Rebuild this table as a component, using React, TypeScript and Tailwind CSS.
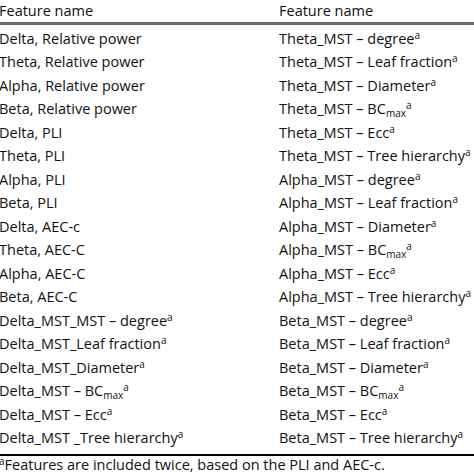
import React from "react";

type Cell = { text: string; sub?: string; sup?: boolean };

const rows: [Cell, Cell][] = [
  [{ text: "Delta, Relative power" }, { text: "Theta_MST – degree", sup: true }],
  [{ text: "Theta, Relative power" }, { text: "Theta_MST – Leaf fraction", sup: true }],
  [{ text: "Alpha, Relative power" }, { text: "Theta_MST – Diameter", sup: true }],
  [{ text: "Beta, Relative power" }, { text: "Theta_MST – BC", sub: "max", sup: true }],
  [{ text: "Delta, PLI" }, { text: "Theta_MST – Ecc", sup: true }],
  [{ text: "Theta, PLI" }, { text: "Theta_MST – Tree hierarchy", sup: true }],
  [{ text: "Alpha, PLI" }, { text: "Alpha_MST – degree", sup: true }],
  [{ text: "Beta, PLI" }, { text: "Alpha_MST – Leaf fraction", sup: true }],
  [{ text: "Delta, AEC-c" }, { text: "Alpha_MST – Diameter", sup: true }],
  [{ text: "Theta, AEC-C" }, { text: "Alpha_MST – BC", sub: "max", sup: true }],
  [{ text: "Alpha, AEC-C" }, { text: "Alpha_MST – Ecc", sup: true }],
  [{ text: "Beta, AEC-C" }, { text: "Alpha_MST – Tree hierarchy", sup: true }],
  [{ text: "Delta_MST_MST – degree", sup: true }, { text: "Beta_MST – degree", sup: true }],
  [{ text: "Delta_MST_Leaf fraction", sup: true }, { text: "Beta_MST – Leaf fraction", sup: true }],
  [{ text: "Delta_MST_Diameter", sup: true }, { text: "Beta_MST – Diameter", sup: true }],
  [{ text: "Delta_MST – BC", sub: "max", sup: true }, { text: "Beta_MST – BC", sub: "max", sup: true }],
  [{ text: "Delta_MST – Ecc", sup: true }, { text: "Beta_MST – Ecc", sup: true }],
  [{ text: "Delta_MST _Tree hierarchy", sup: true }, { text: "Beta_MST – Tree hierarchy", sup: true }],
];

const Label = ({ cell }: { cell: Cell }) => (
  <span className="whitespace-nowrap">
    {cell.text}
    {cell.sub && <sub className="text-[10px] leading-none">{cell.sub}</sub>}
    {cell.sup && <sup className="text-[10px] leading-none">a</sup>}
  </span>
);

export default function App() {
  return (
    <div
      className="w-[474px] h-[475px] overflow-hidden bg-white text-[#111] text-[14.5px]"
      style={{ fontFamily: '"Open Sans", "Noto Sans", sans-serif' }}
    >
      {/* header */}
      <div className="flex h-[22px] items-center -ml-px">
        <div className="w-[280px]">Feature name</div>
        <div>Feature name</div>
      </div>
      <div className="h-[3px] bg-[#6b6b6b]" />

      {/* body */}
      <div className="pt-[2px] pb-[4px]">
        {rows.map(([l, r], i) => (
          <div key={i} className="flex h-[23.5px] items-center -ml-px">
            <div className="w-[280px]">
              <Label cell={l} />
            </div>
            <div>
              <Label cell={r} />
            </div>
          </div>
        ))}
      </div>
      <div className="h-[2px] bg-black" />

      {/* footnote */}
      <div className="-ml-px whitespace-nowrap leading-[18px]">
        <sup className="text-[10px] leading-none">a</sup>Features are included twice, based on the PLI and AEC-c.
      </div>
    </div>
  );
}
